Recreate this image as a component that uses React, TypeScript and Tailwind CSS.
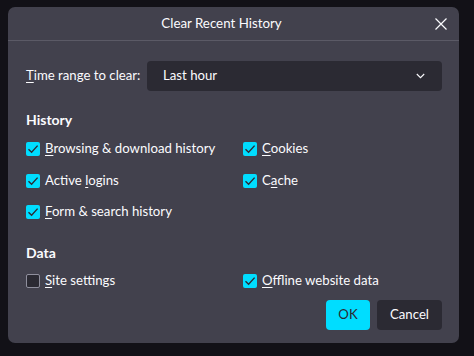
import React from 'react';

const font = { fontFamily: 'Lato, "Noto Sans", sans-serif' };

function Check({ on }: { on: boolean }) {
  if (!on) {
    return <span className="w-[14px] h-[14px] rounded-[2px] border border-[#8f8f9d] bg-[#2b2a33] shrink-0" />;
  }
  return (
    <span className="w-[14px] h-[14px] rounded-[2px] bg-[#00ddff] shrink-0 flex items-center justify-center">
      <svg width="12" height="12" viewBox="0 0 12 12" fill="none">
        <path d="M1.5 6.2 L4.6 9.2 L10.6 2.6" stroke="#2b2a33" strokeWidth="1.4" />
      </svg>
    </span>
  );
}

function Item({ on, pre, key2, post }: { on: boolean; pre: string; key2: string; post: string }) {
  return (
    <div className="flex items-center gap-[5px] h-[20px]">
      <Check on={on} />
      <span className="text-[13.2px] text-[#fbfbfe] leading-none whitespace-nowrap">
        {pre}
        <u className="underline-offset-2">{key2}</u>
        {post}
      </span>
    </div>
  );
}

export default function App() {
  return (
    <div className="w-[474px] h-[356px] bg-[#121117] pl-[8px] pt-[7px]" style={font}>
      <div className="w-[451px] h-[336px] rounded-[7px] bg-[#42414d] flex flex-col">
        <div className="h-[34px] border-b border-[#5b5a66] relative flex items-center justify-center pr-[24px]">
          <span className="text-[13.3px] text-[#fbfbfe]">Clear Recent History</span>
          <svg className="absolute right-[12px] top-[11px]" width="12" height="12" viewBox="0 0 12 12">
            <path d="M0.5 0.5 L11.5 11.5 M11.5 0.5 L0.5 11.5" stroke="#fbfbfe" strokeWidth="1.2" />
          </svg>
        </div>

        <div className="pl-[18px] pr-[17px] flex flex-col">
          <div className="mt-[20px] flex items-center h-[30px]">
            <span className="text-[13.2px] text-[#fbfbfe] w-[121px] whitespace-nowrap">
              <u className="underline-offset-2">T</u>ime range to clear:
            </span>
            <div className="flex-1 h-[30px] rounded-[4px] bg-[#2b2a33] flex items-center justify-between pl-[16px] pr-[17px]">
              <span className="text-[13.2px] text-[#fbfbfe]">Last hour</span>
              <svg width="9" height="6" viewBox="0 0 9 6" fill="none">
                <path d="M0.8 1 L4.5 4.7 L8.2 1" stroke="#fbfbfe" strokeWidth="1.1" />
              </svg>
            </div>
          </div>

          <div className="mt-[19px] text-[14px] font-bold text-[#fbfbfe] leading-[20px]">History</div>
          <div className="mt-[9px] grid grid-cols-[217px_1fr] gap-y-[11.5px]">
            <Item on pre="" key2="B" post="rowsing & download history" />
            <Item on pre="" key2="C" post="ookies" />
            <Item on pre="Active " key2="l" post="ogins" />
            <Item on pre="C" key2="a" post="che" />
            <Item on pre="" key2="F" post="orm & search history" />
          </div>

          <div className="mt-[21px] text-[14px] font-bold text-[#fbfbfe] leading-[20px]">Data</div>
          <div className="mt-[8px] grid grid-cols-[217px_1fr]">
            <Item on={false} pre="" key2="S" post="ite settings" />
            <Item on pre="" key2="O" post="ffline website data" />
          </div>

          <div className="mt-[9px] flex justify-end gap-[7px]">
            <button className="w-[44px] h-[30px] rounded-[4px] bg-[#00ddff] text-[13.2px] text-[#2b2a33]">OK</button>
            <button className="w-[65px] h-[30px] rounded-[4px] bg-[#2b2a33] text-[13.2px] text-[#fbfbfe]">Cancel</button>
          </div>
        </div>
      </div>
    </div>
  );
}
